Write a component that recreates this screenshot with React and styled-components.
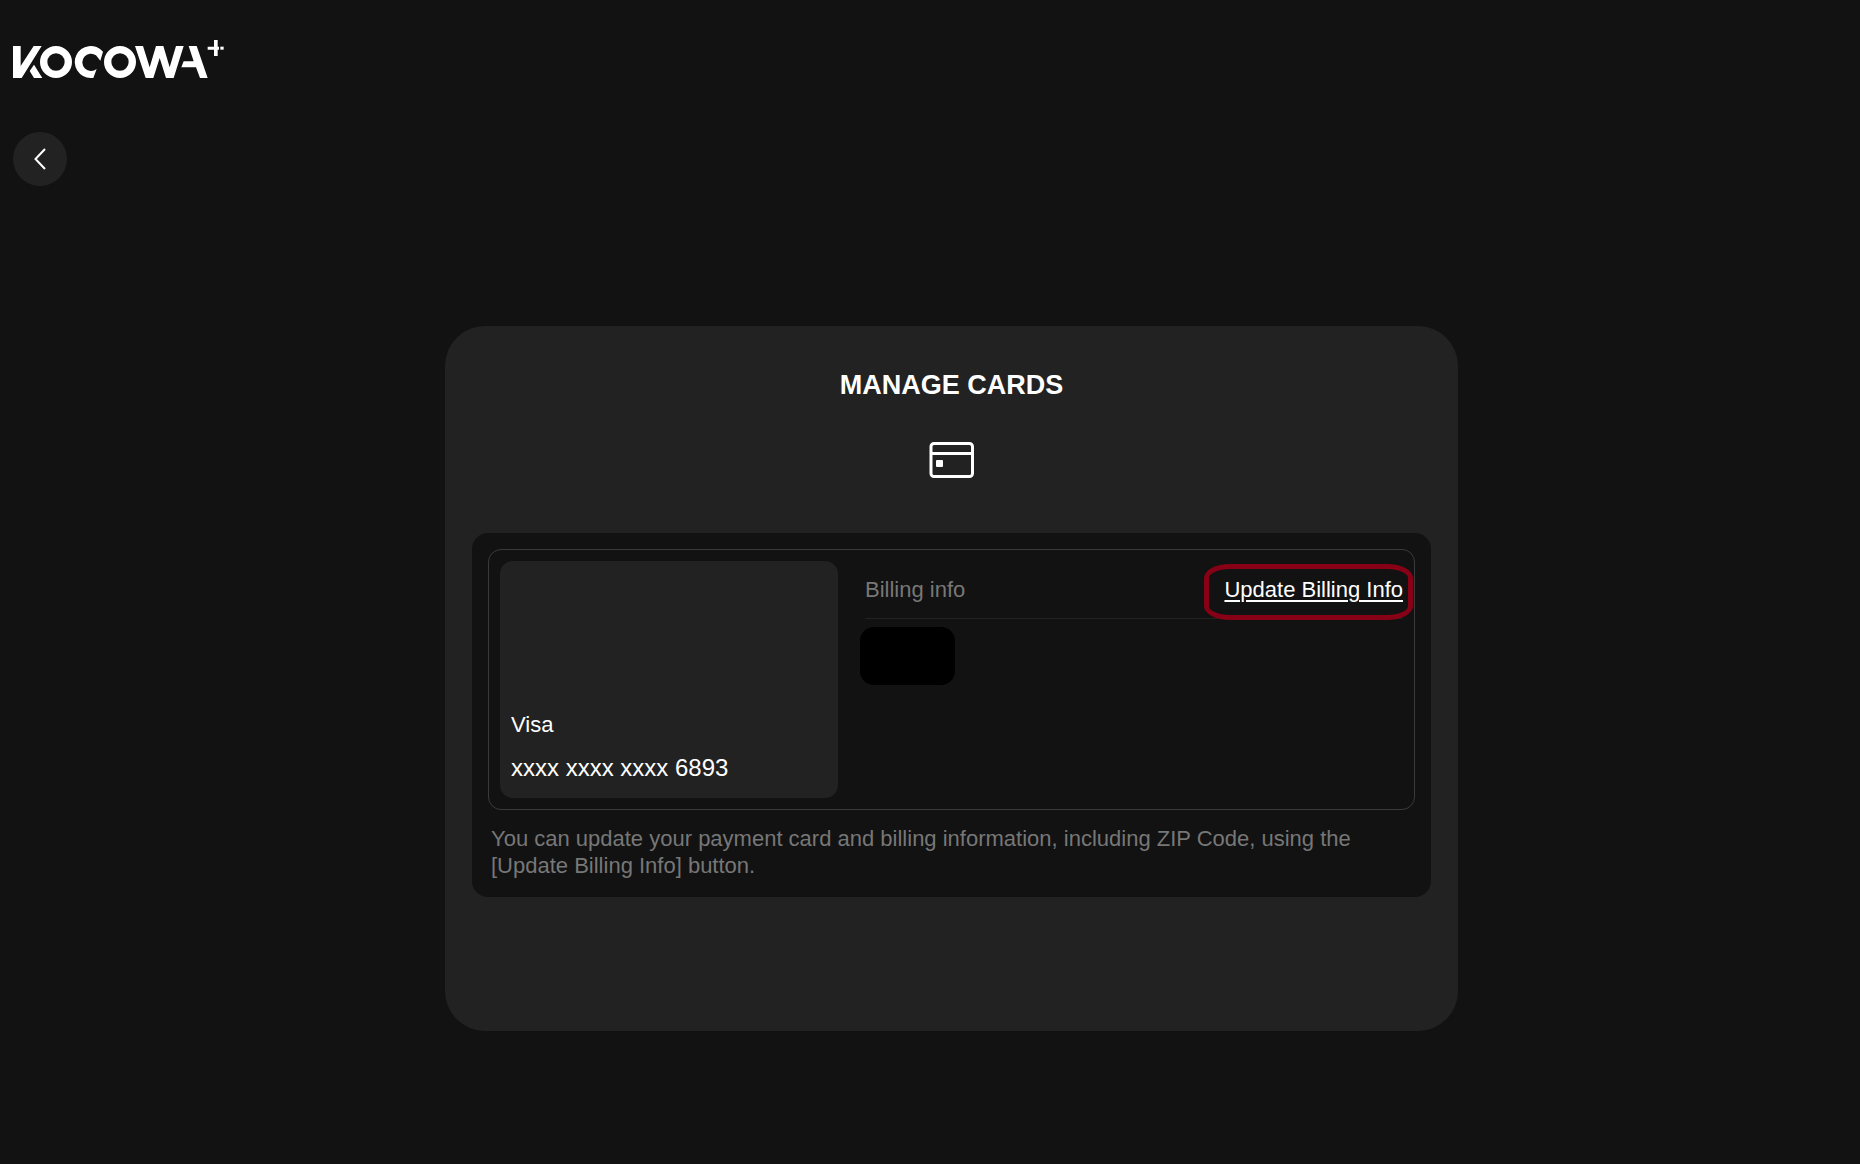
import React from 'react';
import styled, { createGlobalStyle } from 'styled-components';

const GlobalStyle = createGlobalStyle`
  * {
    box-sizing: border-box;
  }

  body {
    margin: 0;
    background: #121212;
    color: #fff;
    font-family: Arial, 'Liberation Sans', sans-serif;
    font-size: 22px;
    line-height: 27px;
  }

  h1, p {
    margin: 0;
  }
`;

const Logo = () => (
  <svg width="211" height="38" viewBox="39 30 633 114" fill="#fff" role="img" aria-label="Kocowa+">
    <path d="M39 48H62V108L101 48H125L65 144H39Z" />
    <path d="M102 104L127 144H102L89 123Z" />
    <circle cx="168" cy="96" r="37" fill="none" stroke="#fff" strokeWidth="22" />
    <path d="M309 65A48 48 0 1 0 272 144H280L290 117A26 26 0 1 1 288 76L301 92Z" />
    <circle cx="360" cy="96" r="37" fill="none" stroke="#fff" strokeWidth="22" />
    <path d="M405 48H429L449 112L468 48H490L509 112L528 48H551L521 144H498L479 84L460 144H437Z" />
    <path d="M566 48H590L623 144H600L588 112H544L551 94H581Z" />
    <path d="M642 30H653V50H657V59H653V78H642V59H623V50H642Z" />
    <path d="M661 50H671V59H661Z" />
  </svg>
);

const CardIcon = () => (
  <svg width="45" height="36" viewBox="0 0 45 36" fill="none" stroke="#fff" strokeWidth="3" aria-hidden="true">
    <rect x="2" y="1.5" width="41.5" height="33" rx="3" />
    <path d="M2 11.5H43" />
    <rect x="7" y="18" width="7" height="7" rx="1" fill="#fff" stroke="none" />
  </svg>
);

const App = () => {
  return (
    <Page>
      <GlobalStyle />
      <Header>
        <Logo />
        <BackButton type="button" aria-label="Back">
          <svg width="12" height="22" viewBox="0 0 12 22" fill="none" stroke="#fff" strokeWidth="2">
            <path d="M11 1L1.5 11L11 21" />
          </svg>
        </BackButton>
      </Header>
      <Main>
        <Panel>
          <Title>MANAGE CARDS</Title>
          <CardIcon />
          <CardSection>
            <CardRow>
              <PaymentCard>
                <p>Visa</p>
                <CardNumber>xxxx xxxx xxxx 6893</CardNumber>
              </PaymentCard>
              <Billing>
                <BillingHeader>
                  <BillingLabel>Billing info</BillingLabel>
                  <UpdateLink href="#update">Update Billing Info</UpdateLink>
                </BillingHeader>
                <HiddenName />
              </Billing>
            </CardRow>
            <Note>
              You can update your payment card and billing information, including ZIP Code, using the
              [Update Billing Info] button.
            </Note>
          </CardSection>
        </Panel>
      </Main>
    </Page>
  );
};

const Page = styled.div`
  min-height: 100vh;
`;

const Header = styled.header`
  display: flex;
  flex-direction: column;
  align-items: flex-start;
  gap: 54px;
  padding: 40px 13px 0;
`;

const BackButton = styled.button`
  display: flex;
  align-items: center;
  justify-content: center;
  width: 54px;
  height: 54px;
  padding: 0;
  border: 0;
  border-radius: 50%;
  background: #222;
  cursor: pointer;
`;

const Main = styled.main`
  display: flex;
  justify-content: center;
  padding: 140px 0 40px 43px;
`;

const Panel = styled.section`
  display: flex;
  flex-direction: column;
  align-items: center;
  width: 100%;
  max-width: 1013px;
  padding: 43px 27px 134px;
  border-radius: 40px;
  background: #222;
`;

const Title = styled.h1`
  margin-bottom: 41px;
  font-size: 27px;
  line-height: 32px;
`;

const CardSection = styled.div`
  align-self: stretch;
  margin-top: 55px;
  padding: 16px 16px 18px;
  border-radius: 16px;
  background: #121212;
`;

const CardRow = styled.div`
  display: flex;
  gap: 27px;
  padding: 11px;
  border: 1px solid #3a3a3a;
  border-radius: 13px;
`;

const PaymentCard = styled.div`
  display: flex;
  flex-direction: column;
  justify-content: flex-end;
  gap: 15px;
  flex: 0 0 338px;
  min-height: 237px;
  padding: 16px 11px;
  border-radius: 13px;
  background: #222;
`;

const CardNumber = styled.p`
  font-size: 24px;
  line-height: 29px;
`;

const Billing = styled.div`
  flex: 1;
`;

const BillingHeader = styled.div`
  display: flex;
  justify-content: space-between;
  padding: 15px 0;
  border-bottom: 1px solid #222;
`;

const BillingLabel = styled.span`
  color: #777;
`;

const UpdateLink = styled.a`
  position: relative;
  color: #fff;
  text-underline-offset: 3px;
  text-decoration-thickness: 2px;

  &::after {
    content: '';
    position: absolute;
    inset: -12px -10px -17px -20px;
    border: 5px solid #880015;
    border-radius: 26px / 14px;
  }
`;

const HiddenName = styled.div`
  width: 95px;
  height: 58px;
  margin: 8px 0 0 -5px;
  border-radius: 14px;
  background: #000;
`;

const Note = styled.p`
  padding: 15px 3px 0;
  color: #777;
`;

export default App;
